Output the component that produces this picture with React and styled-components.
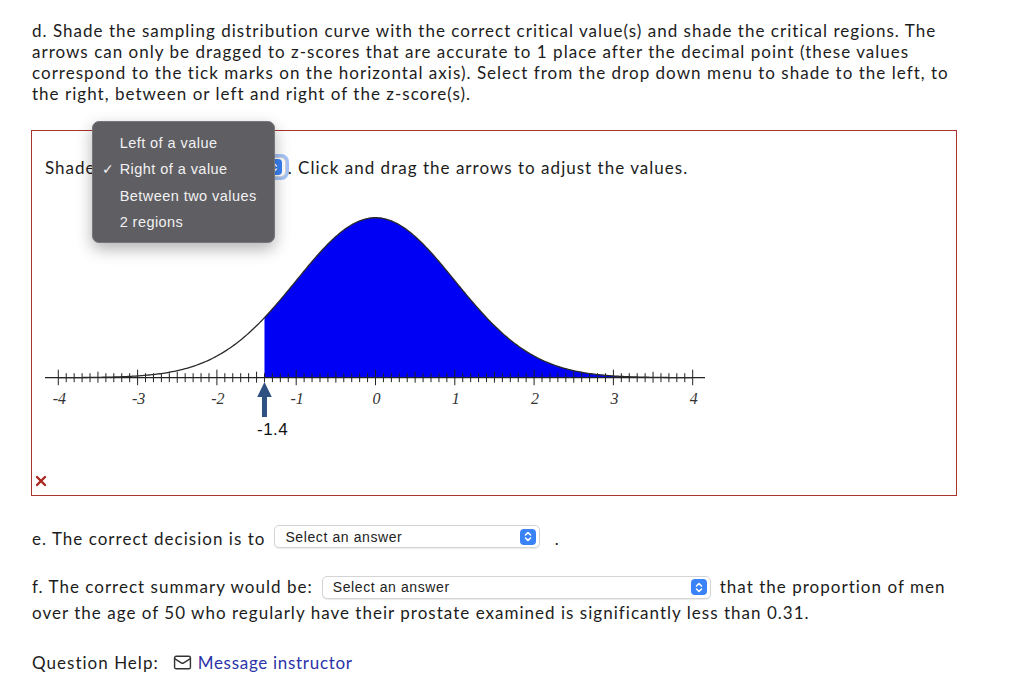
import React from "react";
import styled, { createGlobalStyle } from "styled-components";
import { Mail } from "lucide-react";

const GlobalStyle = createGlobalStyle`
  body {
    margin: 0;
    background: #fff;
    font-family: Lato, "Open Sans", sans-serif;
    color: #1c1c1c;
  }
`;

const Page = styled.div`
  padding: 20px 0 0 32px;
  width: 940px;
  letter-spacing: 1.02px;
`;

const Intro = styled.p`
  margin: 0;
  font-size: 17px;
  line-height: 21px;
`;

const AnswerBox = styled.div`
  margin: 26px 0 0 -1px;
  width: 898px;
  border: 1px solid #a8322c;
  padding: 23px 13px 6px;
`;

const Row = styled.div`
  display: flex;
  align-items: center;
  height: 26px;
  font-size: 17px;
  white-space: nowrap;
`;

const SelectWrap = styled.div`
  position: relative;
  margin: 0 2px 0 5px;
`;

const Select = styled.div`
  display: flex;
  align-items: center;
  justify-content: space-between;
  box-sizing: border-box;
  width: ${(p) => p.width}px;
  height: ${(p) => (p.focused ? 20 : 23)}px;
  padding: 0 3px 0 10px;
  background: #fff;
  border: 1px solid #d4d4d4;
  border-radius: 5px;
  box-shadow: ${(p) =>
    p.focused
      ? "0 0 0 3px rgba(90, 145, 240, 0.55)"
      : "0 1px 1px rgba(0, 0, 0, 0.08)"};
  font-family: "Liberation Sans", Arial, sans-serif;
  font-size: 14px;
  letter-spacing: 0.6px;
  color: #222;
`;

const Stepper = styled.span`
  display: flex;
  align-items: center;
  justify-content: center;
  width: 16px;
  height: 16px;
  border-radius: 4px;
  background: #3a82f7;
`;

const Menu = styled.div`
  position: absolute;
  left: -9px;
  top: -36px;
  width: 183px;
  box-sizing: border-box;
  padding: 8px 0 7px;
  background: #5f5e63;
  border: 1px solid #77767b;
  border-radius: 7px;
  box-shadow: 0 6px 16px rgba(0, 0, 0, 0.3);
  font-family: "Liberation Sans", Arial, sans-serif;
  font-size: 14.5px;
  letter-spacing: 0.45px;
  color: #f2f2f2;
  z-index: 2;
`;

const MenuItem = styled.div`
  position: relative;
  height: 26.3px;
  line-height: 26px;
  padding-left: 27px;
`;

const Check = styled.span`
  position: absolute;
  left: 9px;
  top: 0;
  font-size: 14px;
`;

const Graph = styled.svg`
  display: block;
  margin: 19px 0 0 -13px;
`;

const Cross = styled.div`
  margin: 34px 0 0 -10px;
  height: 16px;
  display: flex;
  align-items: center;
`;

const Line = styled.div`
  display: flex;
  align-items: center;
  height: 24px;
  margin-top: ${(p) => p.top}px;
  font-size: 17px;
  white-space: nowrap;
`;

const Summary = styled.p`
  margin: 24px 0 0;
  font-size: 17px;
  line-height: 26px;
`;

const InlineSelect = styled.span`
  display: inline-flex;
  vertical-align: middle;
  margin: -3px 9px 0 9px;
`;

const Help = styled.div`
  display: flex;
  align-items: center;
  margin-top: 26px;
  height: 20px;
  font-size: 17px;
`;

const Link = styled.a`
  color: #2b33a8;
  text-decoration: none;
  display: flex;
  align-items: center;
  gap: 6px;
  margin-left: 14px;
  letter-spacing: 0.7px;
`;

const StepIcon = () => (
  <Stepper>
    <svg width="8" height="11" viewBox="0 0 8 11" fill="none" stroke="#fff" strokeWidth="1.6" strokeLinecap="round" strokeLinejoin="round">
      <path d="M1.5 4 L4 1.5 L6.5 4" />
      <path d="M1.5 7 L4 9.5 L6.5 7" />
    </svg>
  </Stepper>
);

const AnswerSelect = ({ width, focused, label }) => (
  <Select width={width} focused={focused}>
    <span>{label}</span>
    <StepIcon />
  </Select>
);

const X = (z) => 343.5 + 79.3 * z;
const AXIS = 178.7;
const pdf = (z) => Math.exp(-z * z / 2) / Math.sqrt(2 * Math.PI);
const Y = (z) => AXIS - 401 * pdf(z);

const curvePoints = [];
for (let i = -400; i <= 400; i += 2) {
  const z = i / 100;
  curvePoints.push(`${X(z).toFixed(2)},${Y(z).toFixed(2)}`);
}
const fillPoints = [`${X(-1.4)},${AXIS}`];
for (let i = -140; i <= 400; i += 2) {
  const z = i / 100;
  fillPoints.push(`${X(z).toFixed(2)},${Y(z).toFixed(2)}`);
}
fillPoints.push(`${X(4)},${AXIS}`);

const ticks = [];
for (let i = -40; i <= 40; i++) {
  const up = i % 10 === 0 ? 8 : i % 5 === 0 ? 6 : 4.5;
  const down = i % 10 === 0 ? 7.5 : i % 5 === 0 ? 5 : 4.5;
  ticks.push({ x: X(i / 10), up, down });
}

const Distribution = () => (
  <Graph width="700" height="240" viewBox="0 0 700 240">
    <polygon points={fillPoints.join(" ")} fill="#0000f5" />
    <line x1="13" y1={AXIS} x2="673" y2={AXIS} stroke="#222" strokeWidth="1.3" />
    {ticks.map((t, i) => (
      <line key={i} x1={t.x} y1={AXIS - t.up} x2={t.x} y2={AXIS + t.down} stroke="#222" strokeWidth="1" />
    ))}
    <polyline points={curvePoints.join(" ")} fill="none" stroke="#2a2a2a" strokeWidth="1.3" />
    {[-4, -3, -2, -1, 0, 1, 2, 3, 4].map((z) => (
      <text key={z} x={X(z) + 1} y="205" textAnchor="middle" fontFamily="'Liberation Serif', serif" fontStyle="italic" fontSize="16" fill="#333" letterSpacing="0">
        {z}
      </text>
    ))}
    <polygon
      points={`${X(-1.4)},183 ${X(-1.4) + 7.3},198 ${X(-1.4) + 2.5},198 ${X(-1.4) + 2.5},218 ${X(-1.4) - 2.5},218 ${X(-1.4) - 2.5},198 ${X(-1.4) - 7.3},198`}
      fill="#2f5182"
    />
    <text x="225" y="236" fontFamily="'Liberation Sans', Arial, sans-serif" fontSize="17" fill="#111" letterSpacing="0.5">
      -1.4
    </text>
  </Graph>
);

export default function App() {
  return (
    <Page>
      <GlobalStyle />
      <Intro>
        d. Shade the sampling distribution curve with the correct critical value(s) and shade the critical regions. The
        <br />
        arrows can only be dragged to z-scores that are accurate to 1 place after the decimal point (these values
        <br />
        correspond to the tick marks on the horizontal axis). Select from the drop down menu to shade to the left, to
        <br />
        the right, between or left and right of the z-score(s).
      </Intro>

      <AnswerBox>
        <Row>
          Shade
          <SelectWrap>
            <AnswerSelect width={185} focused label="" />
            <Menu>
              <MenuItem>Left of a value</MenuItem>
              <MenuItem>
                <Check>✓</Check>Right of a value
              </MenuItem>
              <MenuItem>Between two values</MenuItem>
              <MenuItem>2 regions</MenuItem>
            </Menu>
          </SelectWrap>
          . Click and drag the arrows to adjust the values.
        </Row>
        <Distribution />
        <Cross>
          <svg width="12" height="12" viewBox="0 0 12 12" stroke="#a8281e" strokeWidth="2.4" strokeLinecap="round">
            <path d="M2 2 L10 10 M10 2 L2 10" />
          </svg>
        </Cross>
      </AnswerBox>

      <Line top={30}>
        e. The correct decision is to
        <InlineSelect>
          <AnswerSelect width={266} label="Select an answer" />
        </InlineSelect>
        &nbsp;.
      </Line>

      <Summary>
        f. The correct summary would be:
        <InlineSelect>
          <AnswerSelect width={389} label="Select an answer" />
        </InlineSelect>
        that the proportion of men
        <br />
        over the age of 50 who regularly have their prostate examined is significantly less than 0.31.
      </Summary>

      <Help>
        Question Help:
        <Link href="#">
          <Mail size={19} color="#333" strokeWidth={1.8} />
          Message instructor
        </Link>
      </Help>
    </Page>
  );
}
